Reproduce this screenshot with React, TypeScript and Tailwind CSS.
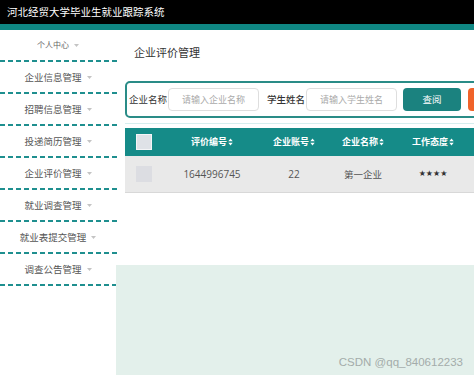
import React from "react";

const menu = [
  "企业信息管理",
  "招聘信息管理",
  "投递简历管理",
  "企业评价管理",
  "就业调查管理",
  "就业表提交管理",
  "调查公告管理",
];

function Sort() {
  return (
    <svg width="5" height="8" viewBox="0 0 5 8" className="ml-[1px]">
      <path d="M2.5 0.5 L4.7 3.3 L0.3 3.3 Z" fill="#ffffff" />
      <path d="M2.5 7.5 L4.7 4.7 L0.3 4.7 Z" fill="#ffffff" />
    </svg>
  );
}

function Caret() {
  return (
    <svg width="5" height="3" viewBox="0 0 5 3" className="ml-[5px]">
      <path d="M0 0 L5 0 L2.5 3 Z" fill="#c4c4c4" />
    </svg>
  );
}

function Dash() {
  return (
    <div className="h-[2px] w-[117px] bg-[repeating-linear-gradient(90deg,#1f8f8f_0px,#1f8f8f_5px,transparent_5px,transparent_8px)]" />
  );
}

export default function App() {
  return (
    <div
      className="w-[474px] h-[375px] overflow-hidden bg-white flex flex-col"
      style={{ fontFamily: '"Noto Sans CJK SC", "Noto Sans", sans-serif' }}
    >
      <header className="h-[24px] shrink-0 bg-black text-white text-[10.5px] pl-[7px] flex items-center">
        河北经贸大学毕业生就业跟踪系统
      </header>
      <div className="h-[6px] shrink-0 bg-[#0f8783]" />
      <div className="flex flex-1 min-h-0">
        <aside className="w-[116px] shrink-0 flex flex-col">
          <div className="h-[30px] flex items-center justify-center text-[8px] text-[#666]">
            个人中心
            <Caret />
          </div>
          <Dash />
          {menu.map((m) => (
            <React.Fragment key={m}>
              <div className="h-[30px] flex items-center justify-center text-[9.5px] text-[#555]">
                {m}
                <Caret />
              </div>
              <Dash />
            </React.Fragment>
          ))}
        </aside>
        <main className="flex-1 min-w-0 flex flex-col">
          <div className="h-[235px] shrink-0 flex flex-col">
            <div className="pl-[18px] pt-[14px] text-[11px] text-[#333] leading-[16px]">企业评价管理</div>
            <div className="ml-[9px] mt-[21px] h-[37px] w-[400px] border-2 border-[#2a8c87] rounded-[5px] flex items-center pl-[2px]">
              <span className="text-[9.5px] text-[#333] w-[38px]">企业名称</span>
              <div className="ml-[1px] w-[91px] h-[23px] border border-[#dedede] rounded-[4px] flex items-center pl-[13px] text-[9px] text-[#aaa]">
                请输入企业名称
              </div>
              <span className="ml-[8px] text-[9.5px] text-[#333] font-medium w-[38px]">学生姓名</span>
              <div className="ml-[1px] w-[91px] h-[23px] border border-[#dedede] rounded-[4px] flex items-center pl-[13px] text-[9px] text-[#aaa]">
                请输入学生姓名
              </div>
              <div className="ml-[6px] w-[58px] h-[23px] rounded-[4px] bg-[#1b827f] text-white text-[9.5px] flex items-center justify-center">
                查阅
              </div>
              <div className="ml-[7px] w-[40px] h-[23px] rounded-[4px] bg-[#f0632a]" />
            </div>
            <div className="ml-[9px] mt-[5px] h-px w-[400px] bg-[#d6eeee]" />
            <div className="ml-[9px] mt-[4px] w-[400px]">
              <div className="h-[28px] bg-[#158b88] flex items-center text-white text-[9px] font-bold">
                <div className="w-[37px] flex justify-center">
                  <div className="w-[16px] h-[16px] bg-[#dfe2e7] border border-[#f4f5f7]" />
                </div>
                <div className="w-[100px] flex items-center justify-center">评价编号<Sort /></div>
                <div className="w-[64px] flex items-center justify-center">企业账号<Sort /></div>
                <div className="w-[74px] flex items-center justify-center">企业名称<Sort /></div>
                <div className="w-[66px] flex items-center justify-center">工作态度<Sort /></div>
              </div>
              <div className="h-[37px] bg-[#e9e9e9] border-b border-[#d8d8d8] flex items-center text-[10px] text-[#555]">
                <div className="w-[37px] flex justify-center">
                  <div className="w-[16px] h-[16px] bg-[#dcdde2]" />
                </div>
                <div className="w-[100px] text-center" style={{ fontFamily: '"Open Sans", sans-serif' }}>1644996745</div>
                <div className="w-[64px] text-center" style={{ fontFamily: '"Open Sans", sans-serif' }}>22</div>
                <div className="w-[74px] text-center text-[9.5px]">第一企业</div>
                <div className="w-[66px] text-center text-[8px] text-[#333]" style={{ fontFamily: '"DejaVu Sans", sans-serif' }}>★★★★</div>
              </div>
            </div>
          </div>
          <div className="flex-1 bg-[#e3f0eb] flex items-end justify-end pr-[11px] pb-[4px]">
            <span className="text-[11.5px] text-[#a4acaa]" style={{ fontFamily: '"Liberation Sans", sans-serif' }}>
              CSDN @qq_840612233
            </span>
          </div>
        </main>
      </div>
    </div>
  );
}
